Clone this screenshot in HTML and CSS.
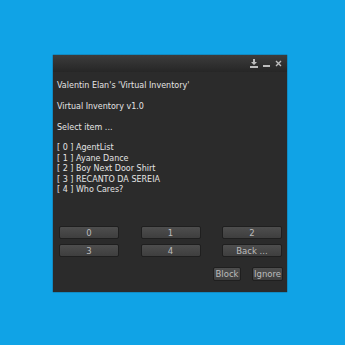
FILE: index.html
```html
<!DOCTYPE html>
<html lang="en">
<head>
  <meta charset="UTF-8">
  <title>Virtual Inventory</title>
  <link rel="stylesheet" href="styles.css">
</head>
<body>
  <div class="dialog">
    <div class="titlebar">
      <span class="ctl">
        <svg width="8" height="9" viewBox="0 0 8 9"><path d="M3 0h2v3h2L4 6 1 3h2z M0 7h8v2H0z" fill="#bdbdbd"/></svg>
      </span>
      <span class="ctl">
        <svg width="7" height="9" viewBox="0 0 7 9"><rect x="0" y="6" width="7" height="2" fill="#bdbdbd"/></svg>
      </span>
      <span class="ctl">
        <svg width="7" height="9" viewBox="0 0 7 9"><path d="M1 2l5 5M6 2l-5 5" stroke="#bdbdbd" stroke-width="1.4"/></svg>
      </span>
    </div>
    <div class="message">
      <p>Valentin Elan's 'Virtual Inventory'</p>
      <p>Virtual Inventory v1.0</p>
      <p>Select item ...</p>
      <p>[ 0 ] AgentList<br>[ 1 ] Ayane Dance<br>[ 2 ] Boy Next Door Shirt<br>[ 3 ] RECANTO DA SEREIA<br>[ 4 ] Who Cares?</p>
    </div>
    <div class="choices">
      <button>0</button>
      <button>1</button>
      <button>2</button>
      <button>3</button>
      <button>4</button>
      <button>Back ...</button>
    </div>
    <div class="actions">
      <button class="small">Block</button>
      <button class="small ignore">Ignore</button>
    </div>
  </div>
</body>
</html>
```

FILE: styles.css
```css
html, body {
  margin: 0;
  padding: 0;
  background: #10a3e6;
  font-family: "DejaVu Sans", sans-serif;
}
body {
  padding: 55px 0 0 53px;
  height: 345px;
  box-sizing: border-box;
}
.dialog {
  width: 234px;
  height: 237px;
  background: #2b2b2b;
  box-shadow: 0 0 1px #1a1a1a;
  display: flex;
  flex-direction: column;
}
.titlebar {
  height: 17px;
  background: linear-gradient(to bottom, #3c3c3c, #262626);
  display: flex;
  justify-content: flex-end;
  align-items: center;
  gap: 4px;
  padding-right: 5px;
}
.ctl {
  display: flex;
  width: 8px;
  justify-content: center;
}
.message {
  padding: 9px 4px 0 4px;
  color: #e4e4e4;
  font-size: 8px;
  line-height: 10.4px;
  height: 145px;
}
.message p {
  margin: 0 0 10.4px 0;
}
.choices {
  display: grid;
  grid-template-columns: 60px 60px 60px;
  justify-content: space-between;
  row-gap: 5px;
  padding: 0 5px 0 6px;
}
button {
  font-family: "DejaVu Sans", sans-serif;
  font-size: 8.5px;
  color: #bcbcbc;
  height: 13px;
  padding: 0;
  border: 1px solid #1f1f1f;
  border-radius: 2px;
  background: linear-gradient(to bottom, #4e4e4e, #3e3e3e);
}
.actions {
  display: flex;
  justify-content: flex-end;
  gap: 11px;
  padding: 10px 4px 0 0;
}
.small {
  height: 14px;
  width: 28px;
}
.ignore {
  width: 31px;
}
```
